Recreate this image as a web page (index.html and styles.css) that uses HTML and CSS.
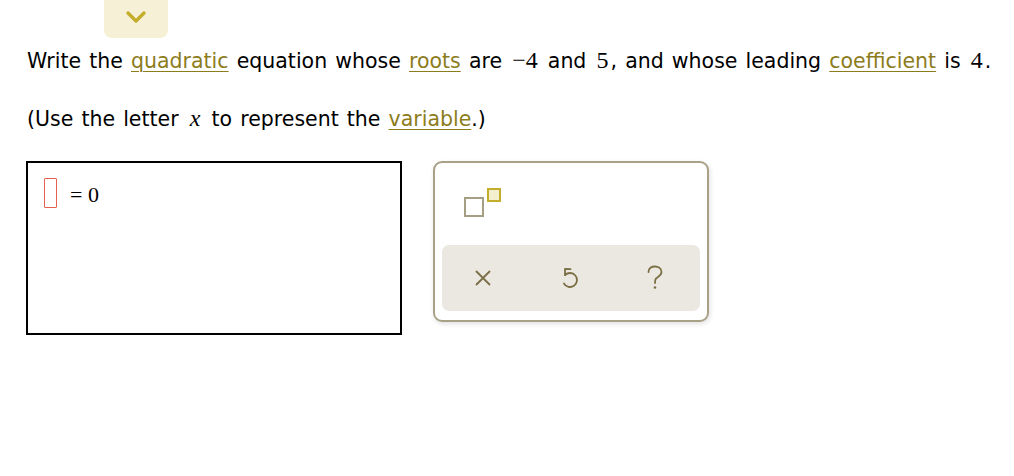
FILE: index.html
```html
<!DOCTYPE html>
<html>
<head>
<meta charset="utf-8">
<link rel="stylesheet" href="styles.css">
</head>
<body>
<div class="page">
  <div class="tab">
    <svg width="22" height="14" viewBox="0 0 22 14"><path d="M3 3 L11 11 L19 3" fill="none" stroke="#c2ae2a" stroke-width="3.4" stroke-linecap="round" stroke-linejoin="round"/></svg>
  </div>
  <p class="q">Write the <a class="lnk">quadratic</a> equation whose <a class="lnk">roots</a> are <span class="m">−4</span> and <span class="m">5</span>, and whose leading <a class="lnk">coefficient</a> is <span class="m">4</span>.</p>
  <p class="q hint">(Use the letter <span class="mi">x</span> to represent the <a class="lnk">variable</a>.)</p>
  <div class="work">
    <div class="answer">
      <span class="ph"></span><span class="eq">= 0</span>
    </div>
    <div class="palette">
      <div class="tools">
        <svg width="46" height="36" viewBox="0 0 46 36"><rect x="8" y="15" width="18" height="18" fill="#fff" stroke="#a59e84" stroke-width="2"/><rect x="31" y="6" width="12" height="12" fill="#f3efcf" stroke="#c2ae2a" stroke-width="2"/></svg>
      </div>
      <div class="bar">
        <svg class="ic" width="20" height="20" viewBox="0 0 20 20"><path d="M3 3 L17 17 M17 3 L3 17" stroke="#7b6f45" stroke-width="1.8" fill="none"/></svg>
        <svg class="ic" width="20" height="24" viewBox="0 0 20 24"><path d="M6.05 9.05 A7 7 0 1 1 4.94 17.5" stroke="#7b6f45" stroke-width="1.8" fill="none" stroke-linecap="round"/><path d="M11.5 3.2 L6 3 L6.05 9.05" stroke="#7b6f45" stroke-width="1.8" fill="none" stroke-linejoin="round" stroke-linecap="round"/></svg>
        <svg class="ic" width="20" height="26" viewBox="0 0 20 26"><path d="M3.5 7 C3.5 3 6.5 1.5 10 1.5 C13.5 1.5 16.5 3.5 16.5 7 C16.5 10.5 13 11.5 11 13.5 C10 14.5 10 16 10 18" stroke="#7b6f45" stroke-width="1.8" fill="none" stroke-linecap="round"/><circle cx="10" cy="22.5" r="1.3" fill="#7b6f45"/></svg>
      </div>
    </div>
  </div>
</div>
</body>
</html>
```
FILE: styles.css
```css
html, body { margin: 0; padding: 0; background: #fff; }
body { width: 1014px; height: 476px; overflow: hidden; font-family: "DejaVu Sans", Verdana, sans-serif; color: #000; }
.page { padding-left: 27px; }
.tab { margin-left: 77px; width: 64px; height: 38px; background: #f6f1d6; border-radius: 0 0 8px 8px; display: flex; align-items: center; justify-content: center; }
.tab svg { margin-top: -4px; }
.q { margin: 0; font-size: 20.5px; line-height: 24px; margin-top: 10px; word-spacing: 1.6px; white-space: nowrap; }
.hint { margin-top: 33px; }
.lnk { color: #8c7c1c; text-decoration: underline; text-underline-offset: 3px; text-decoration-thickness: 1px; }
.m { font-family: "Liberation Serif", "Times New Roman", serif; font-size: 24px; margin: 0 2px; }
.mi { font-family: "Liberation Serif", "Times New Roman", serif; font-size: 24px; font-style: italic; margin: 0 3px; }
.work { display: flex; align-items: flex-start; margin-top: 30px; margin-left: -1px; }
.answer { width: 372px; height: 170px; border: 2px solid #000; display: flex; align-items: flex-start; padding: 0; box-sizing: content-box; }
.ph { display: inline-block; width: 11px; height: 28px; border: 1.5px solid #e5604f; border-radius: 1px; margin: 15px 0 0 16px; }
.eq { font-family: "Liberation Serif", "Times New Roman", serif; font-size: 22px; margin: 19px 0 0 13px; }
.palette { margin-left: 31px; width: 272px; height: 157px; border: 2px solid #a8a187; border-radius: 9px; box-shadow: 1px 2px 5px rgba(0,0,0,0.12); display: flex; flex-direction: column; }
.tools { height: 82px; padding-left: 22px; padding-top: 20px; box-sizing: border-box; }
.bar { margin: 0 7px; height: 66px; background: #ebe8e1; border-radius: 7px; display: flex; align-items: center; justify-content: center; gap: 66px; padding-right: 4px; }
.ic { display: block; }
```
